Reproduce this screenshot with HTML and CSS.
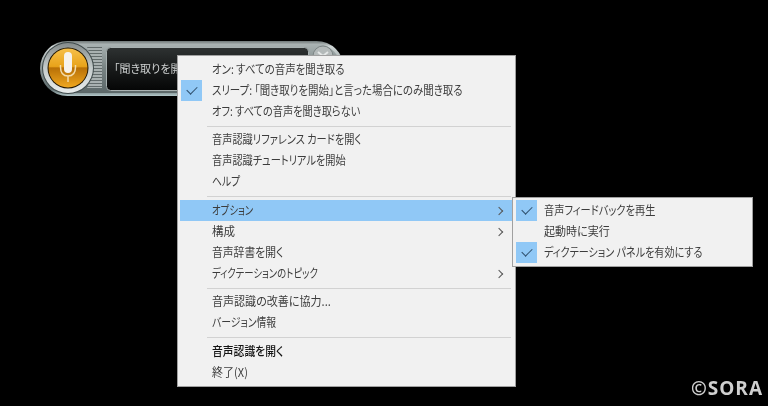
FILE: index.html
```html
<!DOCTYPE html>
<html lang="ja">
<head>
<meta charset="utf-8">
<title>音声認識</title>
<link rel="stylesheet" href="styles.css">
</head>
<body>
<main class="stage">
  <svg class="widget" width="310" height="62" viewBox="0 0 310 62" aria-label="音声認識">
    <defs>
      <linearGradient id="shell" x1="0" y1="0" x2="0" y2="1">
        <stop offset="0" stop-color="#6f7878"/>
        <stop offset="0.1" stop-color="#cfd6d6"/>
        <stop offset="0.5" stop-color="#8d9898"/>
        <stop offset="0.88" stop-color="#5f6d6f"/>
        <stop offset="1" stop-color="#b4c8ca"/>
      </linearGradient>
      <linearGradient id="body" x1="0" y1="0" x2="0" y2="1">
        <stop offset="0" stop-color="#aab3b3"/>
        <stop offset="0.5" stop-color="#778282"/>
        <stop offset="1" stop-color="#5c6869"/>
      </linearGradient>
      <linearGradient id="ring" x1="0" y1="0" x2="0" y2="1">
        <stop offset="0" stop-color="#858c8c"/>
        <stop offset="0.5" stop-color="#c4cbcb"/>
        <stop offset="1" stop-color="#e8ecec"/>
      </linearGradient>
      <linearGradient id="orb" x1="0" y1="0" x2="0" y2="1">
        <stop offset="0" stop-color="#f6c04a"/>
        <stop offset="0.46" stop-color="#e8a31a"/>
        <stop offset="0.5" stop-color="#b87006"/>
        <stop offset="1" stop-color="#f0a820"/>
      </linearGradient>
      <linearGradient id="display" x1="0" y1="0" x2="0" y2="1">
        <stop offset="0" stop-color="#2e3232"/>
        <stop offset="0.5" stop-color="#181a1a"/>
        <stop offset="1" stop-color="#050606"/>
      </linearGradient>
      <pattern id="grille" width="4" height="3" patternUnits="userSpaceOnUse">
        <rect width="4" height="3" fill="#a9b1b1"/>
        <rect width="4" height="1" fill="#626b6b"/>
      </pattern>
    </defs>
    <rect x="3" y="3" width="304" height="55" rx="27.5" fill="url(#shell)"/>
    <rect x="6" y="6" width="298" height="49" rx="24.5" fill="url(#body)"/>
    <path d="M50 9 H65 V50 H50 Q60 30 50 9 Z" fill="url(#grille)"/>
    <circle cx="31" cy="30" r="26" fill="#3f4a4b"/>
    <circle cx="31" cy="30" r="25" fill="url(#ring)"/>
    <circle cx="31" cy="30" r="20.5" fill="#241904"/>
    <circle cx="31" cy="30" r="19.5" fill="url(#orb)"/>
    <rect x="27" y="14" width="8" height="21" rx="4" fill="#f6f3ec"/>
    <path d="M23.500 27 V29 Q23.500 38 31 38 Q38.500 38 38.500 29 V27 M31 38 V44" fill="none" stroke="#f3dcaa" stroke-width="1.500"/>
    <rect x="69.500" y="9.500" width="202" height="43" rx="4" fill="url(#display)" stroke="#a8b1b1"/>
    <circle cx="286" cy="18" r="10" fill="#b4baba" stroke="#7c8585"/>
    <path d="M281 14 L291 22 M291 14 L281 22" stroke="#e4e7e7" stroke-width="2"/>
    <text class="caption" x="77" y="35">「聞き取りを開</text>
  </svg>

  <section class="menu main-menu">
    <div class="item"><span class="label w87">オン: すべての音声を聞き取る</span></div>
    <div class="item checked"><span class="label w87">スリープ: 「聞き取りを開始」と言った場合にのみ聞き取る</span></div>
    <div class="item"><span class="label w85">オフ: すべての音声を聞き取らない</span></div>
    <hr class="sep">
    <div class="item"><span class="label w85">音声認識リファレンス カードを開く</span></div>
    <div class="item"><span class="label w85">音声認識チュートリアルを開始</span></div>
    <div class="item"><span class="label w82">ヘルプ</span></div>
    <hr class="sep">
    <div class="item active has-sub"><span class="label w78">オプション</span></div>
    <div class="item has-sub"><span class="label w96">構成</span></div>
    <div class="item"><span class="label w90">音声辞書を開く</span></div>
    <div class="item has-sub"><span class="label w78">ディクテーションのトピック</span></div>
    <hr class="sep">
    <div class="item"><span class="label w92">音声認識の改善に協力...</span></div>
    <div class="item"><span class="label w82">バージョン情報</span></div>
    <hr class="sep">
    <div class="item strong"><span class="label w90">音声認識を開く</span></div>
    <div class="item"><span class="label w92">終了(X)</span></div>
  </section>

  <section class="menu sub-menu">
    <div class="item checked"><span class="label w85">音声フィードバックを再生</span></div>
    <div class="item"><span class="label w92">起動時に実行</span></div>
    <div class="item checked"><span class="label w84">ディクテーション パネルを有効にする</span></div>
  </section>

  <p class="credit">©SORA</p>
</main>
</body>
</html>
```

FILE: styles.css
```css
* { box-sizing: border-box; }
html, body { margin: 0; height: 100%; background: #000; overflow: hidden; }
.stage {
  position: relative;
  width: 768px;
  height: 406px;
  padding: 38px 0 0 37px;
  font-family: "Noto Sans CJK JP", "Noto Sans", sans-serif;
  font-feature-settings: "palt";
}
.widget { display: block; filter: blur(0.5px); }
.caption { font-size: 11px; fill: #cfd2d2; }

.menu {
  position: absolute;
  background: #f1f1f1;
  border: 1px solid #a0a0a0;
  padding: 3px 2px;
  color: #3c3c3c;
  font-size: 12px;
  line-height: 20px;
}
.main-menu { left: 177px; top: 55px; width: 339px; height: 332px; }
.sub-menu { left: 512px; top: 197px; width: 241px; height: 70px; padding-top: 2px; }

.item {
  position: relative;
  height: 21px;
  padding-left: 32px;
  white-space: nowrap;
}
.sub-menu .item { padding-left: 29px; }
.label {
  display: inline-block;
  transform-origin: left center;
  filter: blur(0.35px);
}
.w78 { transform: scaleX(0.78); }
.w82 { transform: scaleX(0.82); }
.w84 { transform: scaleX(0.84); }
.w85 { transform: scaleX(0.85); }
.w87 { transform: scaleX(0.87); }
.w90 { transform: scaleX(0.9); }
.w92 { transform: scaleX(0.92); }
.w96 { transform: scaleX(0.96); }
.strong { color: #151515; font-weight: 500; }
.active { background: #90c8f6; }
.checked::before {
  content: "";
  position: absolute;
  left: 1px;
  top: 0;
  width: 21px;
  height: 21px;
  background: #90c8f6;
}
.checked::after {
  content: "";
  position: absolute;
  left: 7px;
  top: 6px;
  width: 9px;
  height: 5px;
  border-left: 1.5px solid #2f4f6c;
  border-bottom: 1.5px solid #2f4f6c;
  transform: rotate(-45deg);
}
.has-sub::after {
  content: "";
  position: absolute;
  right: 11px;
  top: 8px;
  width: 5px;
  height: 5px;
  border-top: 1px solid #555;
  border-right: 1px solid #555;
  transform: rotate(45deg);
}
.sep {
  height: 1px;
  margin: 4px 2px 2.4px 27px;
  border: 0;
  background: #d2d2d2;
}
.credit {
  position: absolute;
  right: 5px;
  bottom: 8px;
  margin: 0;
  color: #cfcfcf;
  font: 700 19px/20px "Open Sans", "Noto Sans", sans-serif;
  letter-spacing: 1px;
  filter: blur(0.4px);
}
```
